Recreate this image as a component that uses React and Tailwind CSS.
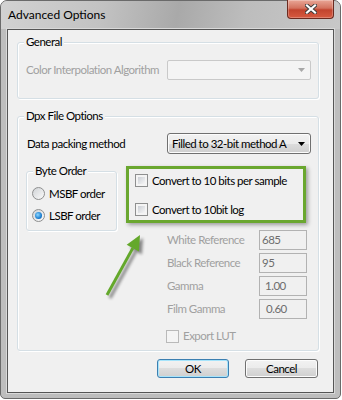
import React from "react";

function GroupBox({ label, className, children }) {
    return (
        <div
            className={`relative rounded-[3px] border border-[#d5dfe5] shadow-[inset_1px_1px_0_#fff,1px_1px_0_#fff] ${className}`}
        >
            <span className="absolute -top-[9px] left-[6px] bg-[#f0f0f0] px-[2px] leading-[16px] text-black">
                {label}
            </span>
            {children}
        </div>
    );
}

function CheckBox() {
    return (
        <span className="block w-[13px] h-[13px] shrink-0 border border-[#8e8f8f] bg-[#f4f4f4] p-[2px]">
            <span className="block w-full h-full bg-[linear-gradient(135deg,#cbcfd5,#f6f6f6)]" />
        </span>
    );
}

function Radio({ checked }) {
    return (
        <span className="flex items-center justify-center w-[13px] h-[13px] shrink-0 rounded-full border border-[#8e8f8f] bg-[linear-gradient(135deg,#d0d3d6,#fbfbfb)]">
            {checked && (
                <span className="block w-[7px] h-[7px] rounded-full bg-[radial-gradient(circle_at_40%_40%,#8fd8ff,#1d7fd0_60%,#0d4f97)]" />
            )}
        </span>
    );
}

function Arrow({ color }) {
    return (
        <svg width="7" height="4" viewBox="0 0 7 4">
            <polygon points="0,0 7,0 3.5,4" fill={color} />
        </svg>
    );
}

function Field({ label, value, pad }) {
    return (
        <div className="flex items-center h-[20px]">
            <span className="w-[92px] text-[#a0a0a0]">{label}</span>
            <span
                className={`flex items-center w-[48px] h-[20px] border border-[#b2b2b2] text-[#6d6d6d] ${pad}`}
            >
                {value}
            </span>
        </div>
    );
}

export default function App() {
    return (
        <div className="w-[342px] h-[400px] bg-white font-['Lato',sans-serif] text-[11.5px] leading-[16px] tracking-[-0.5px] whitespace-nowrap text-black">
            <div className="relative flex flex-col w-[341px] h-[399px] rounded-t-[7px] rounded-b-[5px] border border-[#6a6a6a] bg-[#bdbdbd] px-[6px] pb-[5px]">
                {/* title bar */}
                <div className="absolute inset-x-0 top-0 h-[28px] rounded-t-[6px] bg-[linear-gradient(100deg,#d2d2d2_0%,#c2c2c2_30%,#a9a9a9_52%,#bdbdbd_72%,#c8c8c8_100%)]" />
                <div className="relative flex items-center h-[28px] pl-[1px] text-[12px] tracking-[0px]">
                    Advanced Options
                </div>
                <div className="absolute top-[-1px] right-[6px] flex items-center justify-center w-[47px] h-[19px] rounded-b-[4px] border border-t-0 border-[#6b2a1f] bg-[linear-gradient(#e9a797,#d3725e_45%,#c2442e_55%,#d65a40)] shadow-[inset_0_0_0_1px_rgba(255,255,255,0.25)]">
                    <svg width="12" height="10" viewBox="0 0 12 10">
                        <path d="M2 1.5 L10 8.5 M10 1.5 L2 8.5" stroke="#3b3b3b" strokeWidth="4" strokeLinecap="square" />
                        <path d="M2 1.5 L10 8.5 M10 1.5 L2 8.5" stroke="#ffffff" strokeWidth="2.2" strokeLinecap="square" />
                    </svg>
                </div>

                {/* client area */}
                <div className="relative flex-1 flex flex-col border border-[#555] bg-[#f0f0f0] pl-[9px] shadow-[0_0_0_1px_#d9d9d9]">
                    <GroupBox label="General" className="mt-[12px] w-[302px] h-[57px] shrink-0">
                        <div className="flex items-center pt-[17px] pl-[8px]">
                            <span className="w-[141px] text-[#a0a0a0]">
                                Color Interpolation Algorithm
                            </span>
                            <div className="flex items-center justify-end w-[144px] h-[20px] rounded-[2px] border border-[#c9c9c9] bg-[#f4f4f4] pr-[5px]">
                                <Arrow color="#a8a8a8" />
                            </div>
                        </div>
                    </GroupBox>

                    <GroupBox label="Dpx File Options" className="mt-[17px] w-[302px] h-[235px] shrink-0">
                        <div className="flex items-center pt-[16px] pl-[9px]">
                            <span className="w-[140px]">Data packing method</span>
                            <div className="flex items-center justify-between w-[144px] h-[21px] rounded-[3px] border border-[#707070] bg-[linear-gradient(#f2f2f2,#ebebeb_50%,#dddddd_50%,#cfcfcf)] shadow-[inset_0_0_0_1px_#fcfcfc] pl-[4px] pr-[5px]">
                                <span>Filled to 32-bit method A</span>
                                <Arrow color="#000" />
                            </div>
                        </div>

                        <div className="flex mt-[12px] pl-[8px]">
                            <div className="pt-[5px]">
                                <GroupBox label="Byte Order" className="w-[91px] h-[60px]">
                                    <div className="flex flex-col gap-[9px] pt-[15px] pl-[5px]">
                                        <div className="flex items-center gap-[4px] h-[13px]">
                                            <Radio />
                                            <span>MSBF order</span>
                                        </div>
                                        <div className="flex items-center gap-[4px] h-[13px]">
                                            <Radio checked />
                                            <span>LSBF order</span>
                                        </div>
                                    </div>
                                </GroupBox>
                            </div>

                            <div className="ml-[9px] flex flex-col">
                                <div className="flex flex-col gap-[16px] w-[180px] h-[57px] border-[3px] border-[#6aa72f] pt-[5px] pl-[6px] shadow-[2px_2px_4px_rgba(0,0,0,0.35)]">
                                    <div className="flex items-center gap-[4px] h-[13px]">
                                        <CheckBox />
                                        <span>Convert to 10 bits per sample</span>
                                    </div>
                                    <div className="flex items-center gap-[4px] h-[13px]">
                                        <CheckBox />
                                        <span>Convert to 10bit log</span>
                                    </div>
                                </div>

                                <div className="flex flex-col gap-[3px] mt-[7px] pl-[41px]">
                                    <Field label="White Reference" value="685" pad="pl-[2px]" />
                                    <Field label="Black Reference" value="95" pad="pl-[2px]" />
                                    <Field label="Gamma" value="1.00" pad="pl-[5px]" />
                                    <Field label="Film Gamma" value="0.60" pad="pl-[6px]" />
                                </div>

                                <div className="flex items-center gap-[4px] mt-[9px] pl-[40px] text-[#a0a0a0]">
                                    <span className="block w-[13px] h-[13px] border border-[#b9b9b9] bg-[#f4f4f4]" />
                                    <span>Export LUT</span>
                                </div>
                            </div>
                        </div>

                        {/* annotation arrow */}
                        <svg className="absolute left-[78px] top-[112px]" width="60" height="76" viewBox="0 0 60 76">
                            <defs>
                                <filter id="sh" x="-50%" y="-50%" width="200%" height="200%">
                                    <feGaussianBlur stdDeviation="1.5" />
                                </filter>
                            </defs>
                            <g transform="translate(3,3)" filter="url(#sh)" opacity="0.45">
                                <line x1="11" y1="66" x2="36.8" y2="19.1" stroke="#000" strokeWidth="3" />
                                <polygon points="44,6 42.9,22.5 30.7,15.7" fill="#000" />
                            </g>
                            <line x1="11" y1="66" x2="36.8" y2="19.1" stroke="#64a82b" strokeWidth="3" />
                            <polygon points="44,6 42.9,22.5 30.7,15.7" fill="#64a82b" />
                        </svg>
                    </GroupBox>

                    <div className="flex gap-[16px] mt-[8px] pl-[140px]">
                        <button className="w-[72px] h-[19px] rounded-[3px] border border-[#3c7fb1] bg-[linear-gradient(#f2f2f2,#ebebeb_50%,#dddddd_50%,#cfcfcf)] shadow-[inset_0_0_0_1px_#a6e4fb] leading-[16px]">
                            OK
                        </button>
                        <button className="w-[73px] h-[19px] rounded-[3px] border border-[#707070] bg-[linear-gradient(#f2f2f2,#ebebeb_50%,#dddddd_50%,#cfcfcf)] shadow-[inset_0_0_0_1px_#fcfcfc] leading-[16px]">
                            Cancel
                        </button>
                    </div>
                </div>
            </div>
        </div>
    );
}
